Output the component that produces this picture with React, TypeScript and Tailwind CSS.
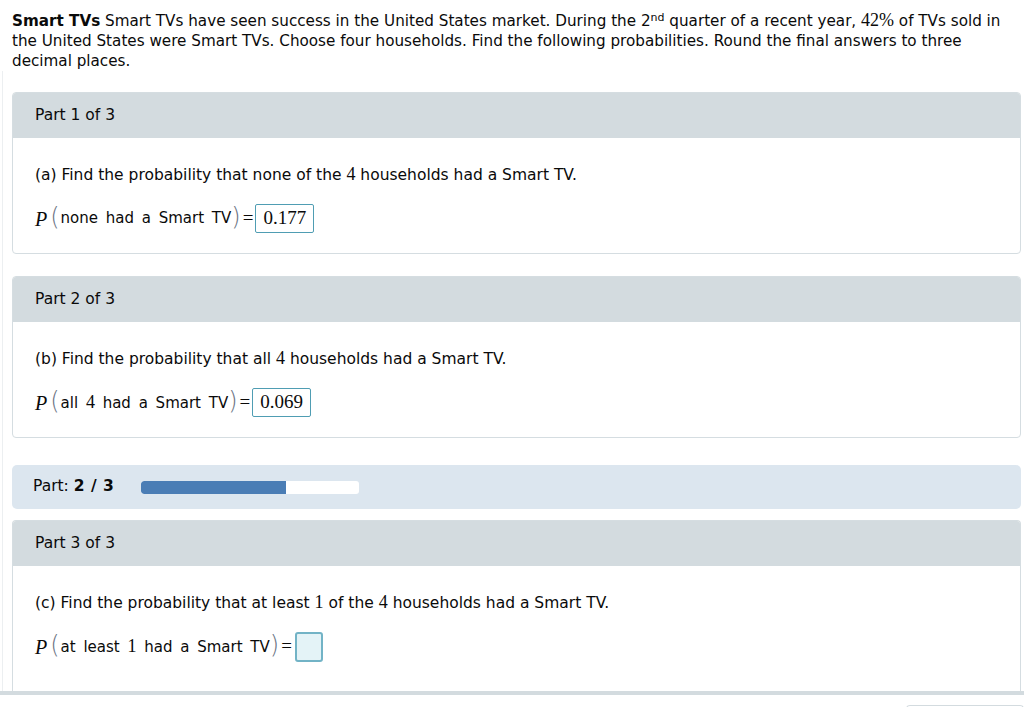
import React from 'react'

const sans = "font-['DejaVu_Sans',Verdana,sans-serif]"
const serif = "font-['Liberation_Serif','Times_New_Roman',serif]"

const Num: React.FC<{ children: React.ReactNode }> = ({ children }) => (
  <span className={`${serif} text-[18px]`}>{children}</span>
)

const Formula: React.FC<{ label: React.ReactNode; answer?: string }> = ({ label, answer }) => (
  <div className="flex items-center h-[29px]">
    <span className={`${serif} italic text-[20px] mr-[3px]`}>P</span>
    <span className="text-[24px] text-gray-500 font-extralight leading-none -mt-[3px]">(</span>
    <span className="text-[15px] [word-spacing:3px] ml-[1px]">{label}</span>
    <span className="text-[24px] text-gray-500 font-extralight leading-none -mt-[3px]">)</span>
    <span className={`${serif} text-[19px] mx-[2px]`}>=</span>
    {answer ? (
      <div className={`${serif} text-[19px] h-[29px] px-[7px] flex items-center border border-[#4f9db3] rounded-[2px] bg-white`}>
        {answer}
      </div>
    ) : (
      <div className="h-[30px] w-[28px] border-2 border-[#72b3c6] rounded-[3px] bg-[#e4f3f7] ml-[1px]" />
    )}
  </div>
)

const PartCard: React.FC<{ title: string; question: React.ReactNode; formula: React.ReactNode; open?: boolean }> = ({
  title,
  question,
  formula,
  open,
}) => (
  <div className={`border border-[#d5dde1] rounded-[4px] bg-white ${open ? 'border-b-0 rounded-b-none' : ''}`}>
    <div className="h-[45px] bg-[#d3dbdf] rounded-t-[3px] flex items-center pl-[22px] text-[15.5px]">{title}</div>
    <div className={`pl-[22px] pt-[26px] ${open ? 'pb-[40px]' : 'pb-[20px]'}`}>
      <div className="leading-[20px] text-[15.5px]">{question}</div>
      <div className="mt-[19px]">{formula}</div>
    </div>
  </div>
)

const App: React.FC = () => {
  return (
    <div className={`${sans} text-[#0a0a0a] h-[707px] w-[1024px] overflow-hidden flex flex-col bg-white`}>
      <div className="flex-1 overflow-hidden">
        <div className="px-[12px] pt-[10px] text-[15.2px] leading-[20px]">
          <b>Smart TVs</b> Smart TVs have seen success in the United States market. During the 2
          <sup className="text-[11px]">nd</sup> quarter of a recent year,{' '}
          <span className={`${serif} text-[18px]`}>42%</span> of TVs sold in the United States were Smart TVs.
          Choose four households. Find the following probabilities. Round the final answers to three decimal places.
        </div>

        <div className="ml-[2px] border-l border-[#eceff1] pl-[9px] pr-[3px] pt-[21px] space-y-[22px]">
          <PartCard
            title="Part 1 of 3"
            question={
              <>
                (a) Find the probability that none of the <Num>4</Num> households had a Smart TV.
              </>
            }
            formula={<Formula label="none had a Smart TV" answer="0.177" />}
          />
          <PartCard
            title="Part 2 of 3"
            question={
              <>
                (b) Find the probability that all <Num>4</Num> households had a Smart TV.
              </>
            }
            formula={
              <Formula
                label={
                  <>
                    all <Num>4</Num> had a Smart TV
                  </>
                }
                answer="0.069"
              />
            }
          />
          <div className="pt-[5px]">
            <div className="h-[44px] bg-[#dce6ef] rounded-[5px] flex items-center pl-[21px] text-[15.5px]">
              <span className="w-[108px]">
                Part: <b className="tracking-[0.5px]">2 / 3</b>
              </span>
              <div className="w-[218px] h-[13px] bg-white rounded-[3px] overflow-hidden">
                <div className="h-full w-[145px] bg-[#4a7db5] rounded-l-[3px]" />
              </div>
            </div>
            <div className="mt-[11px]">
              <PartCard
                open
                title="Part 3 of 3"
                question={
                  <>
                    (c) Find the probability that at least <Num>1</Num> of the <Num>4</Num> households had a Smart TV.
                  </>
                }
                formula={
                  <Formula
                    label={
                      <>
                        at least <Num>1</Num> had a Smart TV
                      </>
                    }
                  />
                }
              />
            </div>
          </div>
        </div>
      </div>
      <div className="h-[16px] shrink-0 border-t-4 border-[#d3dbdf] flex justify-end pt-[10px]">
        <div className="w-[118px] h-[10px] border border-[#d3dbdf] rounded-t-[4px] border-b-0" />
      </div>
    </div>
  )
}

export default App
